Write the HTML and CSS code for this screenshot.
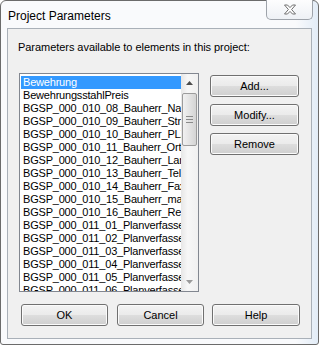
FILE: index.html
```html
<!DOCTYPE html>
<html>
<head>
<meta charset="utf-8">
<link rel="stylesheet" href="styles.css">
</head>
<body>
<div class="window">
  <div class="titlebar">
    <span class="title">Project Parameters</span>
    <button class="close" aria-label="Close">
      <svg width="14" height="11" viewBox="0 0 14 11">
        <path d="M1.5 1 H4.5 L7 3.6 L9.5 1 H12.5 L8.6 5.5 L12.5 10 H9.5 L7 7.4 L4.5 10 H1.5 L5.4 5.5 Z" fill="#ffffff" stroke="#6f6f6f" stroke-width="1" stroke-linejoin="round"/>
      </svg>
    </button>
  </div>
  <div class="client">
    <div class="label">Parameters available to elements in this project:</div>
    <div class="main">
      <div class="listbox">
        <div class="items">
          <div class="item selected">Bewehrung</div>
          <div class="item">BewehrungsstahlPreis</div>
          <div class="item">BGSP_000_010_08_Bauherr_Name</div>
          <div class="item">BGSP_000_010_09_Bauherr_Strasse</div>
          <div class="item">BGSP_000_010_10_Bauherr_PLZ</div>
          <div class="item">BGSP_000_010_11_Bauherr_Ort</div>
          <div class="item">BGSP_000_010_12_Bauherr_Land</div>
          <div class="item">BGSP_000_010_13_Bauherr_Tel</div>
          <div class="item">BGSP_000_010_14_Bauherr_Fax</div>
          <div class="item">BGSP_000_010_15_Bauherr_mail</div>
          <div class="item">BGSP_000_010_16_Bauherr_Reserve</div>
          <div class="item">BGSP_000_011_01_Planverfasser_Name</div>
          <div class="item">BGSP_000_011_02_Planverfasser_Strasse</div>
          <div class="item">BGSP_000_011_03_Planverfasser_PLZ</div>
          <div class="item">BGSP_000_011_04_Planverfasser_Ort</div>
          <div class="item">BGSP_000_011_05_Planverfasser_Land</div>
          <div class="item">BGSP_000_011_06_Planverfasser_Tel</div>
        </div>
        <div class="scrollbar">
          <div class="arrow">
            <svg width="7" height="4" viewBox="0 0 7 4"><path d="M0 4 L3.5 0 L7 4 Z" fill="#4d4d4d"/></svg>
          </div>
          <div class="thumb">
            <svg width="7" height="7" viewBox="0 0 7 7"><path d="M0 0.5 H7 M0 3.5 H7 M0 6.5 H7" stroke="#8a8a8a" stroke-width="1"/></svg>
          </div>
          <div class="track"></div>
          <div class="arrow">
            <svg width="7" height="4" viewBox="0 0 7 4"><path d="M0 0 L3.5 4 L7 0 Z" fill="#9a9a9a"/></svg>
          </div>
        </div>
      </div>
      <div class="side">
        <button class="btn side-btn">Add...</button>
        <button class="btn side-btn">Modify...</button>
        <button class="btn side-btn">Remove</button>
      </div>
    </div>
    <div class="footer">
      <button class="btn foot-btn ok">OK</button>
      <button class="btn foot-btn cancel">Cancel</button>
      <button class="btn foot-btn help">Help</button>
    </div>
  </div>
</div>
</body>
</html>
```
FILE: styles.css
```css
html, body {
  margin: 0;
  padding: 0;
  background: #ffffff;
}

body {
  width: 319px;
  height: 345px;
  overflow: hidden;
  font-family: "Liberation Sans", Arial, sans-serif;
  font-size: 11px;
  color: #000;
}

.window {
  box-sizing: border-box;
  width: 319px;
  height: 345px;
  border: 1px solid #6b6b6b;
  border-radius: 6px 6px 3px 3px;
  background: linear-gradient(to right, #f9fafc 0%, #f9fafc 93%, #e2ecf7 100%);
  display: flex;
  flex-direction: column;
  padding: 0 6px 5px 6px;
}

.titlebar {
  height: 27px;
  display: flex;
  align-items: flex-start;
  justify-content: space-between;
}

.title {
  font-size: 12px;
  line-height: 14px;
  margin-top: 8px;
  margin-left: 1px;
  color: #000;
}

.close {
  box-sizing: border-box;
  width: 47px;
  height: 20px;
  margin-top: -1px;
  margin-right: -1px;
  padding: 0;
  border: 1px solid #9ea3aa;
  border-top: none;
  border-radius: 0 0 5px 5px;
  background: linear-gradient(to bottom, #fdfdfe 0%, #eef1f5 100%);
  display: flex;
  align-items: center;
  justify-content: center;
}

.client {
  flex: 1;
  border: 1px solid #a9b0b8;
  background: #f0f0f0;
  display: flex;
  flex-direction: column;
  padding: 12px 0 0 11px;
}

.label {
  height: 13px;
  line-height: 13px;
  margin-left: -1px;
  white-space: nowrap;
  letter-spacing: -0.05px;
}

.main {
  display: flex;
  margin-top: 19px;
  gap: 11px;
}

.listbox {
  box-sizing: border-box;
  width: 180px;
  height: 219px;
  border: 1px solid #828790;
  background: #fff;
  display: flex;
}

.items {
  flex: 1;
  overflow: hidden;
  padding: 2px 0 0 1px;
}

.item {
  height: 13px;
  line-height: 13px;
  padding-left: 2px;
  white-space: nowrap;
  overflow: hidden;
  letter-spacing: -0.2px;
}

.item.selected {
  background: #3399ff;
  color: #fff;
}

.scrollbar {
  width: 17px;
  display: flex;
  flex-direction: column;
  background: linear-gradient(to right, #e7e7e7, #f7f7f7 40%, #f0f0f0);
}

.arrow {
  height: 18px;
  display: flex;
  align-items: center;
  justify-content: center;
}

.thumb {
  box-sizing: border-box;
  height: 53px;
  margin: 1px 1px 0 1px;
  border: 1px solid #9c9c9c;
  border-radius: 2px;
  background: linear-gradient(to right, #f1f1f1, #e3e3e3 50%, #d4d4d4);
  display: flex;
  align-items: center;
  justify-content: center;
}

.track {
  flex: 1;
}

.side {
  display: flex;
  flex-direction: column;
  gap: 7px;
  margin-top: 2px;
}

.btn {
  box-sizing: border-box;
  height: 22px;
  padding: 0;
  border: 1px solid #707070;
  border-radius: 3px;
  background: linear-gradient(to bottom, #f3f3f3 0%, #ebebeb 48%, #dddddd 52%, #cfcfcf 100%);
  box-shadow: inset 0 0 0 1px #fbfbfb;
  font-family: "Liberation Sans", Arial, sans-serif;
  font-size: 11px;
  color: #000;
  text-align: center;
}

.side-btn {
  width: 89px;
}

.footer {
  display: flex;
  margin-top: 12px;
  margin-left: 2px;
}

.foot-btn {
  width: 87px;
}

.cancel {
  margin-left: 9px;
}

.help {
  margin-left: 8px;
  width: 88px;
}
```
